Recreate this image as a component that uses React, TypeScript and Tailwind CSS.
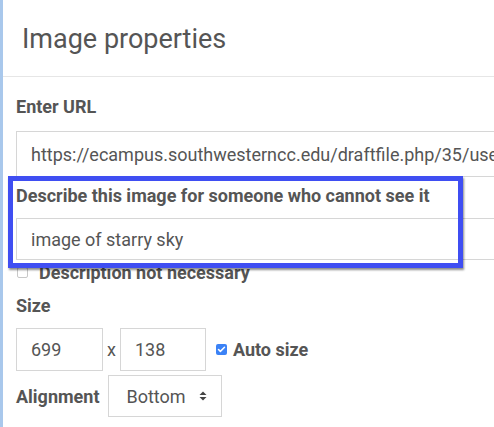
import { Check } from "lucide-react";

const font = { fontFamily: "Roboto, 'Liberation Sans', sans-serif" };

function Field({ value, className }: { value: string; className: string }) {
  return (
    <div
      className={`flex items-center border border-[#d6d6d6] bg-white pl-[14px] text-[18px] text-[#555] whitespace-nowrap overflow-hidden ${className}`}
    >
      {value}
    </div>
  );
}

export default function App() {
  return (
    <div
      style={font}
      className="relative h-[427px] w-[494px] overflow-hidden border-l-[3px] border-[#a9c8ec] bg-white"
    >
      {/* Header */}
      <div className="h-[77px] border-b border-[#e6e6e6] pl-[19px] pt-[23px]">
        <h1 className="text-[27px] leading-[32px] text-[#555]">Image properties</h1>
      </div>

      {/* Body */}
      <div className="pl-[13px]">
        <label className="mt-[18px] block text-[18px] font-bold leading-6 text-[#555]">Enter URL</label>
        <Field
          value="https://ecampus.southwesterncc.edu/draftfile.php/35/user/draft"
          className="mt-[12px] h-[46px] w-[500px]"
        />

        <label className="mt-[7px] block text-[18px] font-bold leading-6 text-[#555]">
          Describe this image for someone who cannot see it
        </label>
        <Field value="image of starry sky" className="mt-[10px] h-[42px] w-[500px]" />

        <div className="flex h-6 items-center">
          <span className="ml-[1px] h-[11px] w-[11px] rounded-[2px] border border-[#c8c8c8] bg-white" />
          <span className="ml-[11px] text-[18px] font-bold text-[#555]">Description not necessary</span>
        </div>

        <label className="mt-[10px] block text-[18px] font-bold leading-6 text-[#555]">Size</label>
        <div className="mt-[10px] flex items-center">
          <Field value="699" className="h-[43px] w-[87px]" />
          <span className="mx-[4px] text-[18px] text-[#555]">x</span>
          <Field value="138" className="h-[43px] w-[86px]" />
          <span className="ml-[10px] flex h-[11px] w-[11px] items-center justify-center rounded-[2px] bg-[#3b82f6]">
            <Check className="h-[9px] w-[9px] text-white" strokeWidth={4} />
          </span>
          <span className="ml-[6px] text-[18px] font-bold text-[#555]">Auto size</span>
        </div>

        <div className="mt-[4px] flex items-center">
          <span className="text-[18px] font-bold text-[#555]">Alignment</span>
          <div className="ml-[8px] flex h-[42px] w-[114px] items-center justify-between border border-[#d6d6d6] pl-[18px] pr-[14px] text-[18px] text-[#555]">
            <span>Bottom</span>
            <svg width="8" height="10" viewBox="0 0 8 10" className="fill-[#444]">
              <path d="M4 0.5 L7.5 4 H0.5 Z" />
              <path d="M0.5 6 H7.5 L4 9.5 Z" />
            </svg>
          </div>
        </div>
      </div>

      {/* Highlight box */}
      <div className="pointer-events-none absolute left-[5px] top-[176px] h-[92px] w-[455px] border-[5px] border-[#3f4ef2] shadow-[1px_2px_2px_rgba(0,0,0,0.45)]" />
    </div>
  );
}
